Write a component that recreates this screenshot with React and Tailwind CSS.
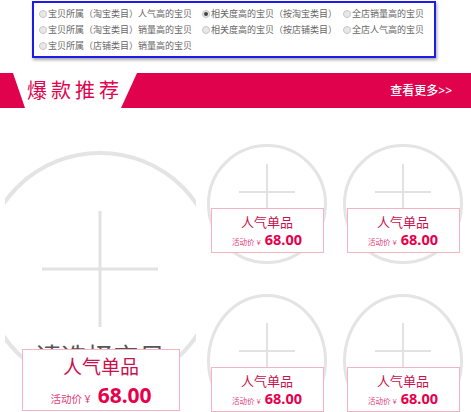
import React from "react";

const sortOptions = [
  { label: "宝贝所属（淘宝类目）人气高的宝贝" },
  { label: "相关度高的宝贝（按淘宝类目）", checked: true },
  { label: "全店销量高的宝贝" },
  { label: "宝贝所属（淘宝类目）销量高的宝贝" },
  { label: "相关度高的宝贝（按店铺类目）" },
  { label: "全店人气高的宝贝" },
  { label: "宝贝所属（店铺类目）销量高的宝贝" },
];

const Radio = ({ checked }) => (
  <span className="w-[8px] h-[8px] rounded-full border border-[#c6c6c6] bg-[#e8e8e8] flex items-center justify-center shrink-0">
    {checked && <span className="w-[4px] h-[4px] rounded-full bg-[#444]" />}
  </span>
);

const SortPanel = () => (
  <div className="ml-[32px] mt-[1px] w-[404px] h-[57px] border-2 border-[#1c1ce6] shadow-[1px_2px_3px_rgba(0,0,0,0.35)] pt-[3px] pl-[5px] grid grid-cols-[163px_141px_1fr] auto-rows-[16px] text-[9px] text-[#666]">
    {sortOptions.map((opt) => (
      <label key={opt.label} className="flex items-center gap-[1px] whitespace-nowrap">
        <Radio checked={opt.checked} />
        <span>{opt.label}</span>
      </label>
    ))}
  </div>
);

const Banner = () => (
  <div className="mt-[15px] h-[35px] flex">
    <div className="w-[25px] h-full bg-[#e0024c] [clip-path:polygon(0_0,13px_0,25px_100%,0_100%)]" />
    <div className="w-[96px] pl-[2px] flex items-center whitespace-nowrap text-[20px] leading-none tracking-[4px] text-[#e0024c]">
      爆款推荐
    </div>
    <div className="flex-1 h-full bg-[#e0024c] [clip-path:polygon(16px_0,100%_0,100%_100%,0_100%)] flex items-center justify-end pr-[19px] text-white text-[12px] font-medium">
      查看更多&gt;&gt;
    </div>
  </div>
);

// placeholder cross inside the empty image circle
const Cross = ({ size, thick, className = "" }) => (
  <div className={`relative shrink-0 ${className}`} style={{ width: size, height: size }}>
    <div className="absolute left-0 right-0 top-1/2 -translate-y-1/2 bg-[#e2e2e2]" style={{ height: thick }} />
    <div className="absolute top-0 bottom-0 left-1/2 -translate-x-1/2 bg-[#e2e2e2]" style={{ width: thick }} />
  </div>
);

const BigItem = () => (
  <div className="ml-[5px] w-[191px] h-[304px] overflow-hidden pt-[43px]">
    <div className="ml-[-24px] w-[238px] h-[238px] rounded-full border-4 border-[#e4e4e4] flex flex-col items-center">
      <Cross size={116} thick={3} className="mt-[56px]" />
      <div className="mt-[17px] text-[26px] leading-none text-[#555] whitespace-nowrap">请选择宝贝</div>
    </div>
    <div className="relative mt-[-40px] ml-[17px] w-[158px] h-[62px] bg-white border border-[#f5b3c3] flex flex-col items-center pt-[8px]">
      <div className="text-[19px] leading-none text-[#c8124c]">人气单品</div>
      <div className="mt-[8px] flex items-baseline">
        <span className="text-[10.5px] text-[#e2407a]">活动价 ¥</span>
        <span className="ml-[7px] text-[21px] leading-none font-bold text-[#e6004c]">68.00</span>
      </div>
    </div>
  </div>
);

const SmallRow = ({ circleH, crossTop, cardOffset }) => (
  <>
    {[0, 1].map((i) => (
      <div key={i} className="w-[120px]">
        <div
          className="w-[120px] rounded-[50%] border-[3px] border-[#e4e4e4] flex justify-center"
          style={{ height: circleH, paddingTop: crossTop }}
        >
          <Cross size={56} thick={2} />
        </div>
        <div
          className="relative mx-auto w-[113px] h-[45px] bg-white border border-[#f5b3c3] flex flex-col items-center pt-[7px]"
          style={{ marginTop: cardOffset }}
        >
          <div className="text-[13px] leading-none text-[#c8124c]">人气单品</div>
          <div className="mt-[3px] flex items-baseline">
            <span className="text-[7.5px] text-[#e2407a]">活动价 ¥</span>
            <span className="ml-[4px] text-[14.5px] leading-none font-bold text-[#e6004c]">68.00</span>
          </div>
        </div>
      </div>
    ))}
  </>
);

export default function App() {
  return (
    <div className="w-[471px] h-[412px] overflow-hidden bg-white font-['Noto_Sans','Noto_Sans_CJK_SC',sans-serif]">
      <SortPanel />
      <Banner />
      <div className="flex">
        <BigItem />
        <div className="ml-[11px] pt-[36px] grid grid-cols-[120px_120px] gap-x-[16px] gap-y-[41px] content-start">
          <SmallRow circleH={120} crossTop={17} cardOffset={-56} />
          <SmallRow circleH={134} crossTop={26} cardOffset={-61} />
        </div>
      </div>
    </div>
  );
}
